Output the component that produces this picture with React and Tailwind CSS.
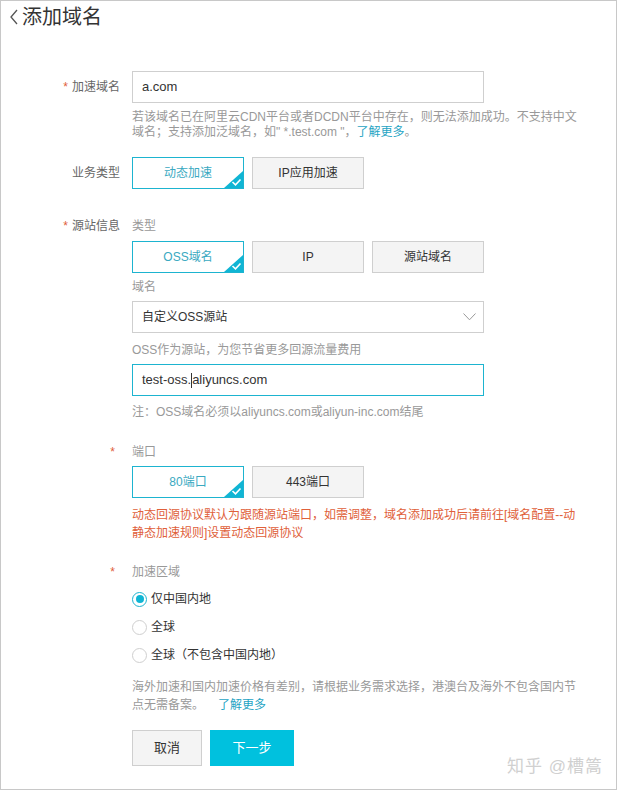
import React from 'react'

const font = { fontFamily: '"Liberation Sans", "Noto Sans CJK SC", sans-serif' }

function Check() {
  return (
    <svg className="absolute right-0 bottom-0" width="19" height="17" viewBox="0 0 19 17">
      <polygon points="19,0 19,17 0,17" fill="#10b5d4" />
      <path d="M8.5 11 L11.5 13.8 L16.5 8.5" stroke="#fff" strokeWidth="1.6" fill="none" />
    </svg>
  )
}

function Choice({ label, active }) {
  if (active) {
    return (
      <div className="relative w-[112px] h-[32px] border border-[#1db4d0] bg-white flex items-center justify-center text-[12px] text-[#3aa9c1]">
        {label}
        <Check />
      </div>
    )
  }
  return (
    <div className="w-[112px] h-[32px] border border-[#cfcfcf] bg-[#f4f4f4] flex items-center justify-center text-[12px] text-[#333]">
      {label}
    </div>
  )
}

function Radio({ label, checked }) {
  return (
    <div className="h-[28px] flex items-center">
      <span
        className={
          checked
            ? 'w-[15px] h-[15px] rounded-full border border-[#1db4d0] flex items-center justify-center'
            : 'w-[15px] h-[15px] rounded-full border border-[#cfcfcf]'
        }
      >
        {checked && <span className="w-[8px] h-[8px] rounded-full bg-[#10b5d4]" />}
      </span>
      <span className="ml-[4px] text-[12px] text-[#333]">{label}</span>
    </div>
  )
}

export default function App() {
  return (
    <div className="bg-white w-[620px] h-[793px]" style={font}>
      <div className="w-[617px] h-[790px] border border-[#c8c8c8] relative">
        {/* Title */}
        <div className="mt-[2px] h-[28px] flex items-center pl-[8px] text-[20px] text-[#333]">
          <svg width="10" height="16" viewBox="0 0 10 16" className="mr-[3px]">
            <path d="M8 1 L2 8 L8 15" stroke="#555" strokeWidth="1.3" fill="none" />
          </svg>
          添加域名
        </div>

        {/* 加速域名 */}
        <div className="flex mt-[40px]">
          <div className="w-[131px] pr-[12px] text-right text-[12px] text-[#666] leading-[32px]">
            <span className="text-[#e0603a] mr-[4px]">*</span>加速域名
          </div>
          <div>
            <div className="w-[352px] h-[32px] border border-[#cfcfcf] flex items-center px-[9px] text-[13px] text-[#333]">
              a.com
            </div>
            <div className="mt-[7px] text-[12px] leading-[15px] text-[#999] whitespace-nowrap">
              若该域名已在阿里云CDN平台或者DCDN平台中存在，则无法添加成功。不支持中文
              <br />
              域名；支持添加泛域名，如" *.test.com "，<span className="text-[#1fa4c4]">了解更多</span>。
            </div>
          </div>
        </div>

        {/* 业务类型 */}
        <div className="flex mt-[17px]">
          <div className="w-[131px] pr-[12px] text-right text-[12px] text-[#666] leading-[32px]">业务类型</div>
          <div className="flex gap-[8px]">
            <Choice label="动态加速" active />
            <Choice label="IP应用加速" />
          </div>
        </div>

        {/* 源站信息 */}
        <div className="flex mt-[29px]">
          <div className="w-[131px] pr-[12px] text-right text-[12px] text-[#666] leading-[16px]">
            <span className="text-[#e0603a] mr-[4px]">*</span>源站信息
          </div>
          <div>
            <div className="text-[12px] leading-[16px] text-[#999]">类型</div>
            <div className="mt-[7px] flex gap-[8px]">
              <Choice label="OSS域名" active />
              <Choice label="IP" />
              <Choice label="源站域名" />
            </div>
            <div className="mt-[6px] text-[12px] leading-[16px] text-[#999]">域名</div>
            <div className="mt-[6px] w-[352px] h-[32px] border border-[#cfcfcf] flex items-center justify-between pl-[9px] pr-[7px] text-[12px] text-[#333]">
              <span>自定义OSS源站</span>
              <svg width="13" height="8" viewBox="0 0 13 8">
                <path d="M0.5 0.5 L6.5 6.8 L12.5 0.5" stroke="#999" strokeWidth="1" fill="none" />
              </svg>
            </div>
            <div className="mt-[9px] text-[12px] leading-[16px] text-[#999]">OSS作为源站，为您节省更多回源流量费用</div>
            <div className="mt-[6px] w-[352px] h-[32px] border border-[#1db4d0] flex items-center px-[9px] text-[13px] text-[#333]">
              test-oss.
              <span className="inline-block w-[1px] h-[15px] bg-[#333]" />
              aliyuncs.com
            </div>
            <div className="mt-[8px] text-[12px] leading-[16px] text-[#999]">注：OSS域名必须以aliyuncs.com或aliyun-inc.com结尾</div>
          </div>
        </div>

        {/* 端口 */}
        <div className="flex mt-[24px]">
          <div className="w-[131px] pr-[17px] text-right text-[12px] text-[#e0603a] leading-[16px]">*</div>
          <div>
            <div className="text-[12px] leading-[16px] text-[#999]">端口</div>
            <div className="mt-[6px] flex gap-[8px]">
              <Choice label="80端口" active />
              <Choice label="443端口" />
            </div>
            <div className="mt-[8px] text-[12px] leading-[18px] text-[#e0603a] whitespace-nowrap">
              动态回源协议默认为跟随源站端口，如需调整，域名添加成功后请前往[域名配置--动
              <br />
              静态加速规则]设置动态回源协议
            </div>
          </div>
        </div>

        {/* 加速区域 */}
        <div className="flex mt-[22px]">
          <div className="w-[131px] pr-[17px] text-right text-[12px] text-[#e0603a] leading-[16px]">*</div>
          <div>
            <div className="text-[12px] leading-[16px] text-[#999]">加速区域</div>
            <div className="mt-[5px]">
              <Radio label="仅中国内地" checked />
              <Radio label="全球" />
              <Radio label="全球（不包含中国内地）" />
            </div>
            <div className="mt-[9px] text-[12px] leading-[18px] text-[#999] whitespace-nowrap">
              海外加速和国内加速价格有差别，请根据业务需求选择，港澳台及海外不包含国内节
              <br />
              点无需备案。<span className="ml-[14px] text-[#1fa4c4]">了解更多</span>
            </div>
            <div className="mt-[16px] flex gap-[8px]">
              <div className="w-[70px] h-[36px] border border-[#cfcfcf] bg-[#f4f4f4] flex items-center justify-center text-[13px] text-[#333]">
                取消
              </div>
              <div className="w-[84px] h-[36px] bg-[#00c1de] flex items-center justify-center text-[13px] text-white">
                下一步
              </div>
            </div>
          </div>
        </div>

        {/* watermark */}
        <div className="absolute right-[13px] bottom-[10px] text-[17px] text-[#d0d0d0] tracking-[1px]">知乎 @槽篙</div>
      </div>
    </div>
  )
}
